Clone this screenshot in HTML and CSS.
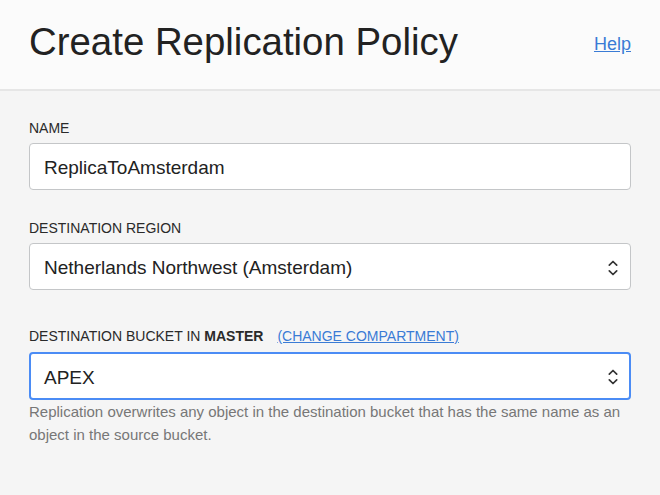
FILE: index.html
```html
<!DOCTYPE html>
<html>
<head>
<meta charset="utf-8">
<link rel="stylesheet" href="styles.css">
</head>
<body>
<header class="header">
  <h1 class="title">Create Replication Policy</h1>
  <a class="help" href="#">Help</a>
</header>
<main class="form">
  <div class="field f1">
    <div class="label">NAME</div>
    <div class="box">ReplicaToAmsterdam</div>
  </div>
  <div class="field f2">
    <div class="label">DESTINATION REGION</div>
    <div class="box select">
      <span>Netherlands Northwest (Amsterdam)</span>
      <svg class="chev" width="12" height="20" viewBox="0 0 12 20"><path d="M2.3 7.2 L6 3.5 L9.7 7.2" fill="none" stroke="#333" stroke-width="1.7" stroke-linecap="round" stroke-linejoin="round"/><path d="M2.3 12.8 L6 16.5 L9.7 12.8" fill="none" stroke="#333" stroke-width="1.7" stroke-linecap="round" stroke-linejoin="round"/></svg>
    </div>
  </div>
  <div class="field f3">
    <div class="label row">DESTINATION BUCKET IN <b>&nbsp;MASTER</b><a class="change" href="#">(CHANGE COMPARTMENT)</a></div>
    <div class="box select focus">
      <span>APEX</span>
      <svg class="chev" width="12" height="20" viewBox="0 0 12 20"><path d="M2.3 7.2 L6 3.5 L9.7 7.2" fill="none" stroke="#333" stroke-width="1.7" stroke-linecap="round" stroke-linejoin="round"/><path d="M2.3 12.8 L6 16.5 L9.7 12.8" fill="none" stroke="#333" stroke-width="1.7" stroke-linecap="round" stroke-linejoin="round"/></svg>
    </div>
    <p class="hint">Replication overwrites any object in the destination bucket that has the same name as an object in the source bucket.</p>
  </div>
</main>
</body>
</html>
```
FILE: styles.css
```css
html, body {
  margin: 0;
  padding: 0;
  height: 100%;
}
body {
  font-family: "Liberation Sans", Arial, sans-serif;
  background: #f5f5f5;
  color: #222;
}
.header {
  box-sizing: border-box;
  height: 91px;
  background: #fbfbfb;
  border-bottom: 2px solid #e6e6e6;
  padding: 23px 29px 0 29px;
  display: flex;
  justify-content: space-between;
  align-items: flex-start;
}
.title {
  margin: 0;
  font-size: 38.4px;
  line-height: 38px;
  font-weight: normal;
  color: #222;
}
.help {
  margin-top: 12px;
  font-size: 18px;
  line-height: 18px;
  color: #3a7bd5;
  text-decoration: underline;
}
.form {
  padding: 30px 29px 0 29px;
}
.field {
  display: flex;
  flex-direction: column;
}
.f2 {
  margin-top: 31px;
}
.f3 {
  margin-top: 39px;
}
.label {
  font-size: 14px;
  line-height: 14px;
  color: #2a2a2a;
  height: 14px;
  margin-bottom: 8px;
}
.label.row {
  display: flex;
  align-items: baseline;
  margin-bottom: 9px;
}
.label b {
  font-weight: bold;
}
.change {
  margin-left: 14px;
  color: #3a7bd5;
  text-decoration: underline;
}
.box {
  box-sizing: border-box;
  width: 602px;
  height: 47px;
  background: #fff;
  border: 1px solid #c4c6c8;
  border-radius: 4px;
  padding: 2px 11px 0 14px;
  display: flex;
  align-items: center;
  justify-content: space-between;
  font-size: 19px;
  line-height: 19px;
  color: #222;
}
.box.focus {
  height: 48px;
  border: 2px solid #4b8cf5;
  padding-left: 13px;
  padding-right: 10px;
}
.chev {
  display: block;
}
.hint {
  margin: 0;
  font-size: 15px;
  line-height: 23px;
  color: #777;
}
```
